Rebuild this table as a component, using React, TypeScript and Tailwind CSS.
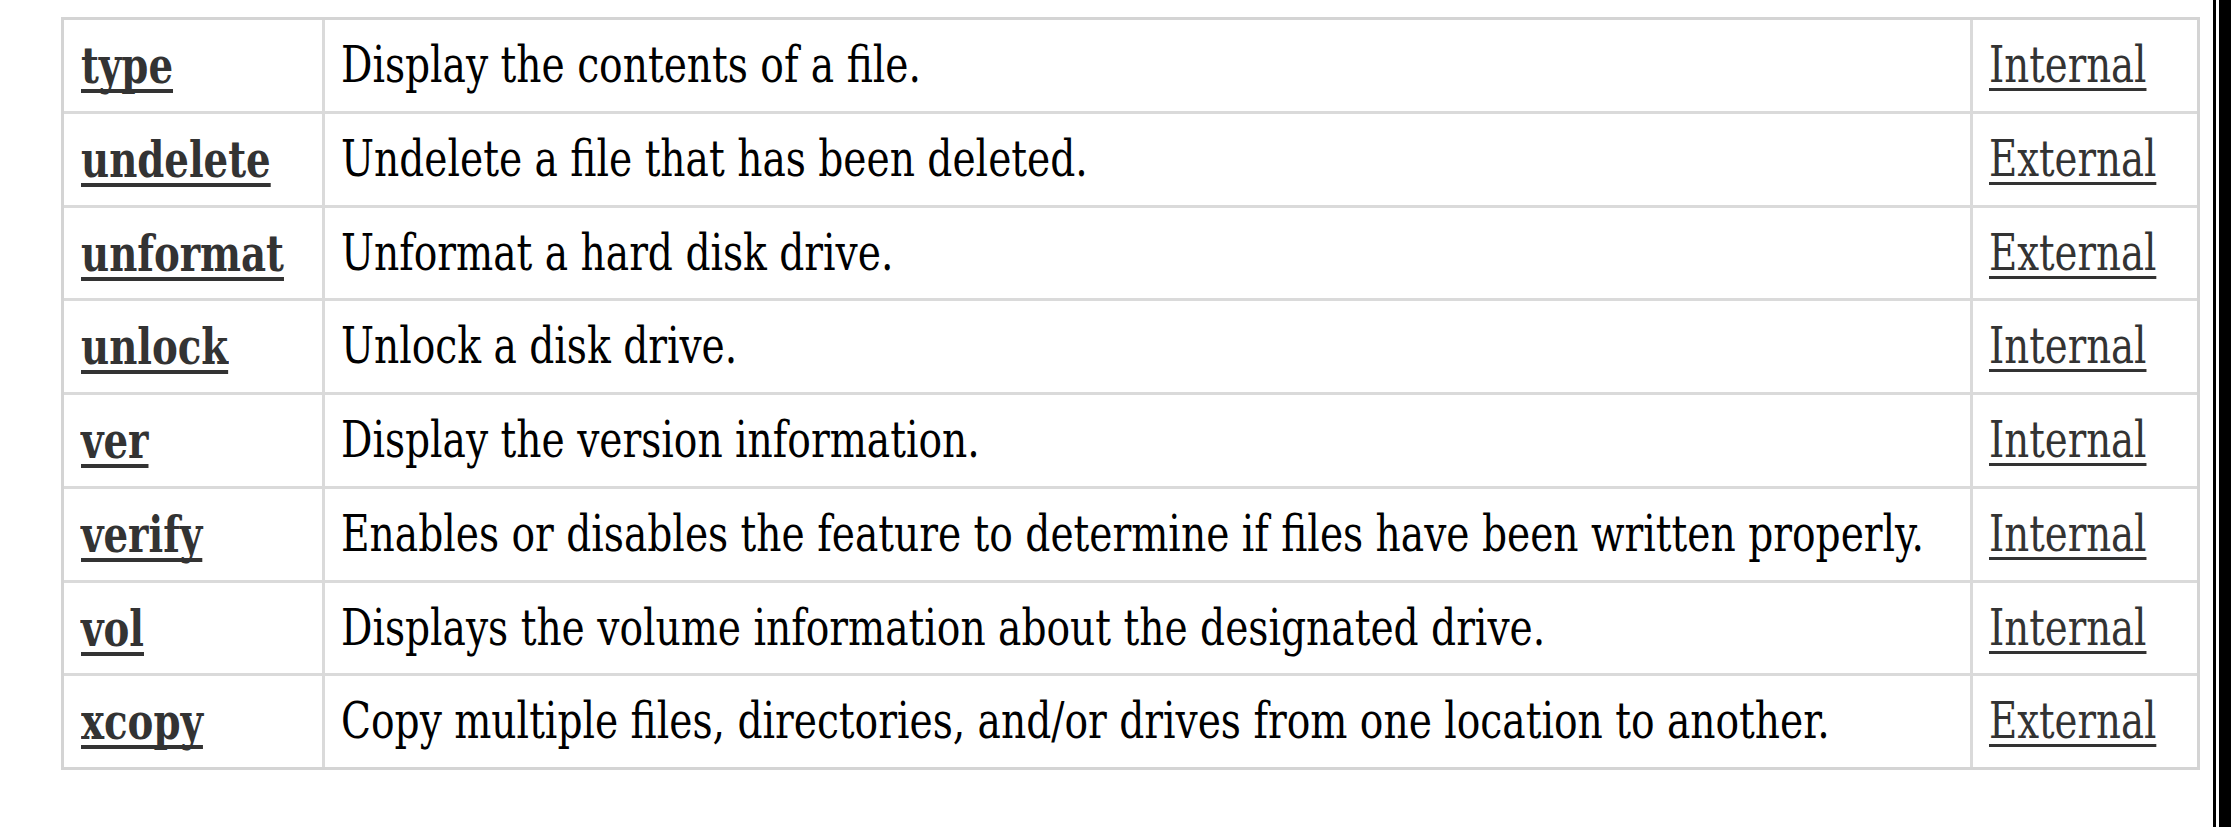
import React from "react";

type Row = { cmd: string; desc: string; kind: string; h: string };

const rows: Row[] = [
  { cmd: "type", desc: "Display the contents of a file.", kind: "Internal", h: "h-[91px]" },
  { cmd: "undelete", desc: "Undelete a file that has been deleted.", kind: "External", h: "h-[94px]" },
  { cmd: "unformat", desc: "Unformat a hard disk drive.", kind: "External", h: "h-[93px]" },
  { cmd: "unlock", desc: "Unlock a disk drive.", kind: "Internal", h: "h-[94px]" },
  { cmd: "ver", desc: "Display the version information.", kind: "Internal", h: "h-[94px]" },
  {
    cmd: "verify",
    desc: "Enables or disables the feature to determine if files have been written properly.",
    kind: "Internal",
    h: "h-[94px]",
  },
  { cmd: "vol", desc: "Displays the volume information about the designated drive.", kind: "Internal", h: "h-[93px]" },
  {
    cmd: "xcopy",
    desc: "Copy multiple files, directories, and/or drives from one location to another.",
    kind: "External",
    h: "h-[94px]",
  },
];

export default function App() {
  return (
    <div
      className="flex h-[827px] w-[2235px] bg-white text-[50px]"
      style={{ fontFamily: "'DejaVu Serif Condensed', 'DejaVu Serif', serif" }}
    >
      <div className="w-[2213px] pl-[61px] pt-[17px]">
        <div className="w-[2139px] border-[3px] border-[#d4d4d4]">
          {rows.map((r, i) => (
            <div
              key={r.cmd}
              className={
                "grid grid-cols-[258px_3px_1645px_3px_224px] " +
                (i > 0 ? "border-t-[3px] border-[#dadada] " : "") +
                r.h
              }
            >
              <div className="flex items-center pl-[17px] whitespace-nowrap">
                <a className="inline-block origin-left scale-x-[0.86] font-bold text-[#333333] underline decoration-[4px] underline-offset-[6px] [text-decoration-skip-ink:none] leading-normal">
                  {r.cmd}
                </a>
              </div>
              <div className="bg-[#dadada]" />
              <div className="flex items-center pl-[16px] whitespace-nowrap">
                <span className="inline-block origin-left scale-x-[0.871] text-black leading-normal">
                  {r.desc}
                </span>
              </div>
              <div className="bg-[#dadada]" />
              <div className="flex items-center pl-[16px] whitespace-nowrap">
                <a className="inline-block origin-left scale-x-[0.86] text-[#333333] underline decoration-[3px] underline-offset-[6px] [text-decoration-skip-ink:none] leading-normal">
                  {r.kind}
                </a>
              </div>
            </div>
          ))}
        </div>
      </div>
      <div className="flex w-[22px]">
        <div className="w-[3px] bg-black" />
        <div className="w-[3px] bg-white" />
        <div className="w-[12px] bg-black" />
        <div className="w-[4px] bg-white" />
      </div>
    </div>
  );
}
